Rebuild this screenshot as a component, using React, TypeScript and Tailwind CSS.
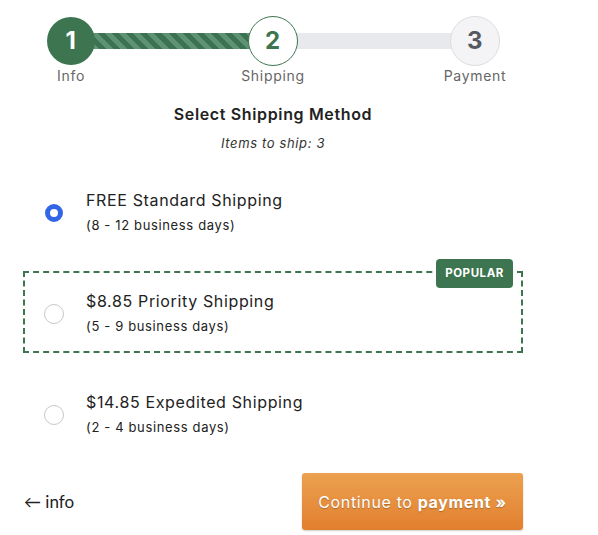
import React from "react";

function Radio({ checked }: { checked?: boolean }) {
  return checked ? (
    <span className="block w-[18px] h-[18px] rounded-full border-[5px] border-[#3366e6] bg-white shrink-0" />
  ) : (
    <span className="block w-[20px] h-[20px] rounded-full border border-[#c8c8c8] bg-white shrink-0" />
  );
}

function Option({
  title,
  days,
  checked,
  popular,
}: {
  title: string;
  days: string;
  checked?: boolean;
  popular?: boolean;
}) {
  return (
    <div
      className={
        "relative h-[82px] flex items-center pl-[19px] " +
        (popular ? "border-2 border-dashed border-[#3d7550]" : "border-2 border-transparent")
      }
    >
      <div className="w-[20px] flex justify-center mt-[4px]">
        <Radio checked={checked} />
      </div>
      <div className="ml-[22px] flex flex-col">
        <span className="text-[16px] leading-[22px] text-[#222]">{title}</span>
        <span className="text-[13px] leading-[18px] text-[#222] mt-[5px]">{days}</span>
      </div>
      {popular && (
        <span className="absolute right-[8px] top-[-14px] h-[29px] px-[9px] flex items-center rounded-[4px] bg-[#3d7550] text-white text-[11.5px] font-bold tracking-[0.05em]">
          POPULAR
        </span>
      )}
    </div>
  );
}

export default function App() {
  return (
    <div
      className="w-[598px] h-[535px] bg-white overflow-hidden tracking-[0.04em]"
      style={{ fontFamily: "Inter, 'Open Sans', sans-serif" }}
    >
      <div className="ml-[23px] w-[500px] pt-[17px]">
        {/* stepper */}
        <div className="relative">
          <div className="absolute left-[48px] right-[48px] top-[16px] h-[16px] flex">
            <div className="w-1/2 h-full bg-[repeating-linear-gradient(45deg,#3b7352_0px,#3b7352_5px,#5f9273_5px,#5f9273_10px)]" />
            <div className="w-1/2 h-full bg-[#e8e9ec]" />
          </div>
          <div className="relative flex justify-between">
            <div className="w-[96px] flex flex-col items-center">
              <div className="w-[48px] h-[48px] rounded-full bg-[#3d7550] flex items-center justify-center text-white text-[24px] font-bold">
                1
              </div>
              <span className="mt-[3px] text-[14px] leading-[16px] tracking-[0.05em] text-[#666]">Info</span>
            </div>
            <div className="w-[96px] flex flex-col items-center">
              <div className="w-[50px] h-[50px] -my-[1px] rounded-full bg-white border border-[#3d7550] flex items-center justify-center text-[#3d7550] text-[24px] font-bold">
                2
              </div>
              <span className="mt-[3px] text-[14px] leading-[16px] tracking-[0.05em] text-[#666]">Shipping</span>
            </div>
            <div className="w-[96px] flex flex-col items-center">
              <div className="w-[50px] h-[50px] -my-[1px] rounded-full bg-[#f4f4f6] border border-[#dcdde0] flex items-center justify-center text-[#555a60] text-[24px] font-bold">
                3
              </div>
              <span className="mt-[3px] text-[14px] leading-[16px] tracking-[0.05em] text-[#666]">Payment</span>
            </div>
          </div>
        </div>

        <div className="mt-[19px] text-center text-[16px] leading-[22px] font-semibold text-[#222]">
          Select Shipping Method
        </div>
        <div className="mt-[9px] text-center text-[13px] leading-[18px] italic text-[#333]">
          Items to ship: 3
        </div>

        <div className="mt-[18px] flex flex-col gap-[19px]">
          <Option title="FREE Standard Shipping" days="(8 - 12 business days)" checked />
          <Option title="$8.85 Priority Shipping" days="(5 - 9 business days)" popular />
          <Option title="$14.85 Expedited Shipping" days="(2 - 4 business days)" />
        </div>

        <div className="mt-[19px] flex items-center justify-between">
          <span
            className="ml-[1px] text-[17px] tracking-normal text-[#222]"
            style={{ fontFamily: "Lato, sans-serif" }}
          >
            ← info
          </span>
          <button className="w-[221px] h-[57px] rounded-[3px] bg-gradient-to-b from-[#eba14f] to-[#e27f2e] text-white text-[16px] tracking-[0.04em] shadow-[0_1px_2px_rgba(0,0,0,0.2)] [text-shadow:0_1px_1px_rgba(0,0,0,0.25)]">
            Continue to <span className="font-bold">payment »</span>
          </button>
        </div>
      </div>
    </div>
  );
}
